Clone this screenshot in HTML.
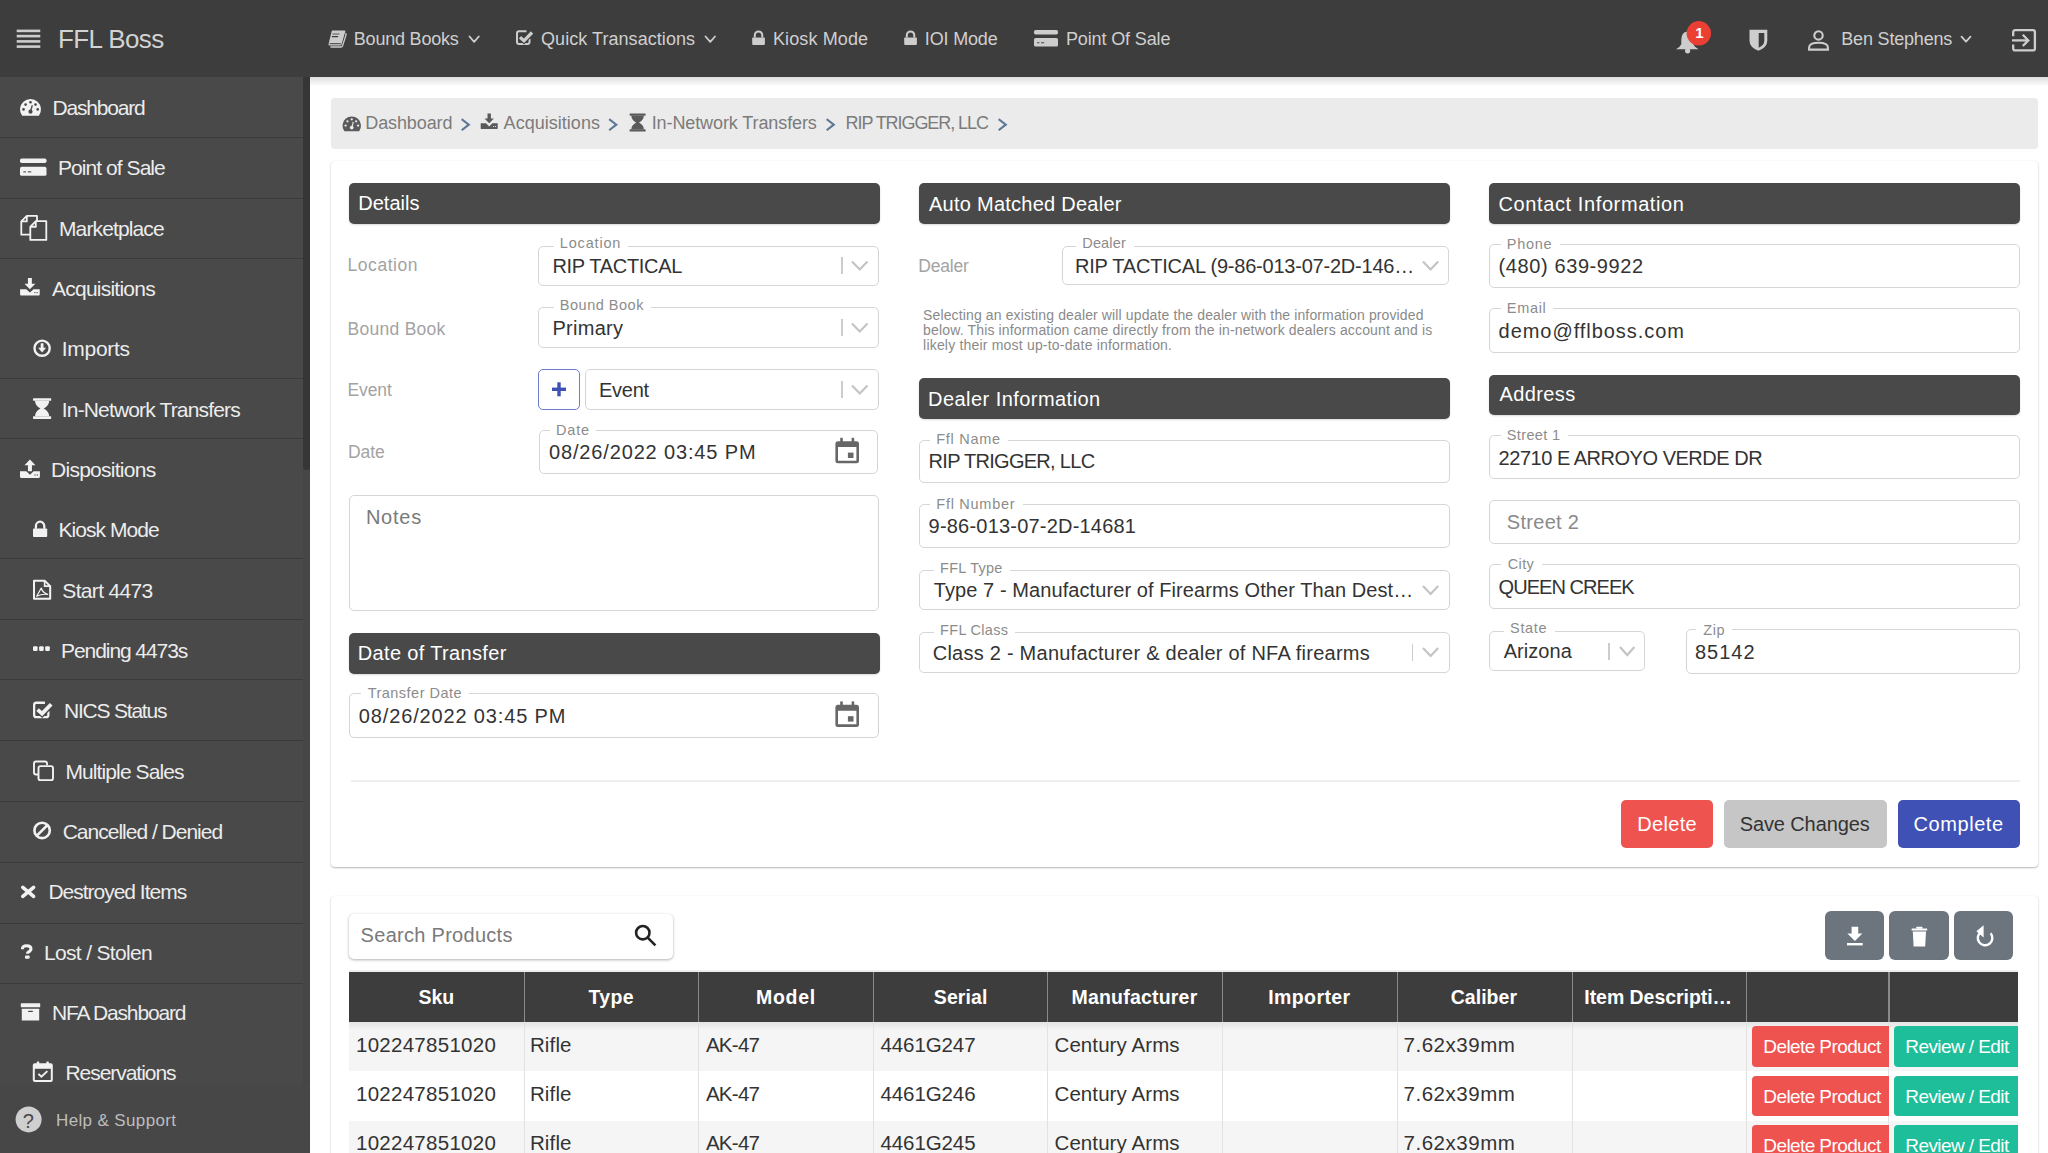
<!DOCTYPE html>
<html><head><meta charset="utf-8"><title>FFL Boss</title>
<style>
html,body{margin:0;padding:0;width:2048px;height:1153px;overflow:hidden;background:#fff;font-family:"Liberation Sans",sans-serif}
#ov{position:absolute;left:0;top:0}
text{font-family:"Liberation Sans",sans-serif;white-space:pre}
</style></head><body>
<div style="position:absolute;left:0px;top:0px;width:2048px;height:77px;background:#3d3d3d"></div><div style="position:absolute;left:310px;top:77px;width:1738px;height:9px;background:linear-gradient(#dcdcdc,rgba(255,255,255,0))"></div><div style="position:absolute;left:0px;top:77px;width:303px;height:1008px;background:#494949"></div><div style="position:absolute;left:303px;top:77px;width:7px;height:1008px;background:#464646"></div><div style="position:absolute;left:303px;top:77px;width:7px;height:393px;background:#363636;border-radius:0 0 3px 3px"></div><div style="position:absolute;left:0px;top:1085px;width:310px;height:68px;background:#474747"></div><div style="position:absolute;left:0px;top:137px;width:303px;height:1px;background:#3b3b3b"></div><div style="position:absolute;left:0px;top:198px;width:303px;height:1px;background:#3b3b3b"></div><div style="position:absolute;left:0px;top:258px;width:303px;height:1px;background:#3b3b3b"></div><div style="position:absolute;left:0px;top:378px;width:303px;height:1px;background:#3b3b3b"></div><div style="position:absolute;left:0px;top:438px;width:303px;height:1px;background:#3b3b3b"></div><div style="position:absolute;left:0px;top:558px;width:303px;height:1px;background:#3b3b3b"></div><div style="position:absolute;left:0px;top:619px;width:303px;height:1px;background:#3b3b3b"></div><div style="position:absolute;left:0px;top:679px;width:303px;height:1px;background:#3b3b3b"></div><div style="position:absolute;left:0px;top:740px;width:303px;height:1px;background:#3b3b3b"></div><div style="position:absolute;left:0px;top:801px;width:303px;height:1px;background:#3b3b3b"></div><div style="position:absolute;left:0px;top:862px;width:303px;height:1px;background:#3b3b3b"></div><div style="position:absolute;left:0px;top:923px;width:303px;height:1px;background:#3b3b3b"></div><div style="position:absolute;left:0px;top:983px;width:303px;height:1px;background:#3b3b3b"></div><div style="position:absolute;left:330.7px;top:98px;width:1707.3px;height:50.69999999999999px;background:#ebebeb;border-radius:4px"></div><div style="position:absolute;left:330.6px;top:161px;width:1707.4px;height:706px;background:#fff;border-radius:4px;box-shadow:0 1px 2px rgba(0,0,0,0.28),0 0 1px rgba(0,0,0,0.10)"></div><div style="position:absolute;left:330.6px;top:896px;width:1707.4px;height:304px;background:#fff;border-radius:4px;box-shadow:0 1px 2px rgba(0,0,0,0.28),0 0 1px rgba(0,0,0,0.10)"></div><div style="position:absolute;left:348.6px;top:183px;width:531.1px;height:41px;background:#494949;border-radius:5px;box-shadow:0 1px 2px rgba(0,0,0,0.15)"></div><div style="position:absolute;left:919.2px;top:183px;width:530.8px;height:41px;background:#494949;border-radius:5px;box-shadow:0 1px 2px rgba(0,0,0,0.15)"></div><div style="position:absolute;left:1489.2px;top:183px;width:531.0999999999999px;height:41px;background:#494949;border-radius:5px;box-shadow:0 1px 2px rgba(0,0,0,0.15)"></div><div style="position:absolute;left:919.2px;top:377.7px;width:530.8px;height:41.0px;background:#494949;border-radius:5px;box-shadow:0 1px 2px rgba(0,0,0,0.15)"></div><div style="position:absolute;left:1489.2px;top:374.6px;width:531.0999999999999px;height:40.39999999999998px;background:#494949;border-radius:5px;box-shadow:0 1px 2px rgba(0,0,0,0.15)"></div><div style="position:absolute;left:348.9px;top:633px;width:530.8000000000001px;height:40.700000000000045px;background:#494949;border-radius:5px;box-shadow:0 1px 2px rgba(0,0,0,0.15)"></div><div style="position:absolute;left:538.4px;top:245.5px;width:340.20000000000005px;height:40.39999999999998px;border:1px solid #d6d6d6;border-radius:5px;box-sizing:border-box;background:#fff"></div><div style="position:absolute;left:553.8px;top:244.5px;width:73.80000000000007px;height:3.0px;background:#fff"></div><div style="position:absolute;left:841px;top:257.0px;width:1.5px;height:17.0px;background:#cccccc"></div><div style="position:absolute;left:538.4px;top:307.3px;width:340.20000000000005px;height:40.5px;border:1px solid #d6d6d6;border-radius:5px;box-sizing:border-box;background:#fff"></div><div style="position:absolute;left:553.8px;top:306.3px;width:97.60000000000002px;height:3.0px;background:#fff"></div><div style="position:absolute;left:841px;top:319.0px;width:1.5px;height:17.0px;background:#cccccc"></div><div style="position:absolute;left:538.4px;top:369.4px;width:41.30000000000007px;height:40.80000000000001px;border:1px solid #6f7cc6;border-radius:5px;box-sizing:border-box"></div><div style="position:absolute;left:585.4px;top:369.4px;width:293.20000000000005px;height:40.80000000000001px;border:1px solid #d6d6d6;border-radius:5px;box-sizing:border-box;background:#fff"></div><div style="position:absolute;left:841px;top:381.0px;width:1.5px;height:17.0px;background:#cccccc"></div><div style="position:absolute;left:538.7px;top:429.8px;width:339.69999999999993px;height:44.19999999999999px;border:1px solid #d6d6d6;border-radius:5px;box-sizing:border-box;background:#fff"></div><div style="position:absolute;left:550px;top:428.8px;width:46.39999999999998px;height:3.0px;background:#fff"></div><div style="position:absolute;left:348.9px;top:494.8px;width:530.3000000000001px;height:116.19999999999999px;border:1px solid #d6d6d6;border-radius:5px;box-sizing:border-box;background:#fff"></div><div style="position:absolute;left:348.9px;top:693.3px;width:530.3000000000001px;height:44.90000000000009px;border:1px solid #d6d6d6;border-radius:5px;box-sizing:border-box;background:#fff"></div><div style="position:absolute;left:360.7px;top:692.3px;width:108.69999999999999px;height:3.0px;background:#fff"></div><div style="position:absolute;left:1061.7px;top:245.5px;width:387.5px;height:39.69999999999999px;border:1px solid #d6d6d6;border-radius:5px;box-sizing:border-box;background:#fff"></div><div style="position:absolute;left:1076.3px;top:244.5px;width:57.700000000000045px;height:3.0px;background:#fff"></div><div style="position:absolute;left:919.2px;top:439.7px;width:530.5px;height:43.30000000000001px;border:1px solid #d6d6d6;border-radius:5px;box-sizing:border-box;background:#fff"></div><div style="position:absolute;left:930.3px;top:438.7px;width:77.90000000000009px;height:3.0px;background:#fff"></div><div style="position:absolute;left:919.2px;top:504px;width:530.5px;height:43.700000000000045px;border:1px solid #d6d6d6;border-radius:5px;box-sizing:border-box;background:#fff"></div><div style="position:absolute;left:930.3px;top:503px;width:92.60000000000002px;height:3px;background:#fff"></div><div style="position:absolute;left:919.2px;top:569.5px;width:530.5px;height:40.700000000000045px;border:1px solid #d6d6d6;border-radius:5px;box-sizing:border-box;background:#fff"></div><div style="position:absolute;left:934.1px;top:568.5px;width:75.89999999999998px;height:3.0px;background:#fff"></div><div style="position:absolute;left:919.2px;top:631.6px;width:530.5px;height:41.0px;border:1px solid #d6d6d6;border-radius:5px;box-sizing:border-box;background:#fff"></div><div style="position:absolute;left:934.1px;top:630.6px;width:81.39999999999998px;height:3.0px;background:#fff"></div><div style="position:absolute;left:1411.7px;top:643.5px;width:1.5px;height:17.0px;background:#cccccc"></div><div style="position:absolute;left:1489.2px;top:243.6px;width:530.8px;height:44.79999999999998px;border:1px solid #d6d6d6;border-radius:5px;box-sizing:border-box;background:#fff"></div><div style="position:absolute;left:1500.8px;top:242.6px;width:58.799999999999955px;height:3.0px;background:#fff"></div><div style="position:absolute;left:1489.2px;top:308.4px;width:530.8px;height:44.60000000000002px;border:1px solid #d6d6d6;border-radius:5px;box-sizing:border-box;background:#fff"></div><div style="position:absolute;left:1500.8px;top:307.4px;width:52.700000000000045px;height:3.0px;background:#fff"></div><div style="position:absolute;left:1489.2px;top:435px;width:530.8px;height:44.30000000000001px;border:1px solid #d6d6d6;border-radius:5px;box-sizing:border-box;background:#fff"></div><div style="position:absolute;left:1500.8px;top:434px;width:67.5px;height:3px;background:#fff"></div><div style="position:absolute;left:1489.2px;top:499.8px;width:530.8px;height:44.599999999999966px;border:1px solid #d6d6d6;border-radius:5px;box-sizing:border-box;background:#fff"></div><div style="position:absolute;left:1489.2px;top:564.4px;width:530.8px;height:44.80000000000007px;border:1px solid #d6d6d6;border-radius:5px;box-sizing:border-box;background:#fff"></div><div style="position:absolute;left:1500.8px;top:563.4px;width:41.0px;height:3.0px;background:#fff"></div><div style="position:absolute;left:1489.2px;top:630.6px;width:156.20000000000005px;height:40.39999999999998px;border:1px solid #d6d6d6;border-radius:5px;box-sizing:border-box;background:#fff"></div><div style="position:absolute;left:1504.1px;top:629.6px;width:50.5px;height:3.0px;background:#fff"></div><div style="position:absolute;left:1608.2px;top:642.5px;width:1.5px;height:17.0px;background:#cccccc"></div><div style="position:absolute;left:1685.6px;top:629.2px;width:334.4000000000001px;height:44.59999999999991px;border:1px solid #d6d6d6;border-radius:5px;box-sizing:border-box;background:#fff"></div><div style="position:absolute;left:1696.3px;top:628.2px;width:36.100000000000136px;height:3.0px;background:#fff"></div><div style="position:absolute;left:351px;top:780px;width:1669px;height:1.5px;background:#eeeeee"></div><div style="position:absolute;left:1621.2px;top:799.7px;width:91.89999999999986px;height:48.69999999999993px;background:#ef5350;border-radius:5px"></div><div style="position:absolute;left:1724px;top:799.7px;width:163.20000000000005px;height:48.69999999999993px;background:#c6c6c6;border-radius:5px"></div><div style="position:absolute;left:1898.2px;top:799.7px;width:122.09999999999991px;height:48.69999999999993px;background:#3f51b5;border-radius:5px"></div><div style="position:absolute;left:348.6px;top:913.5px;width:324.29999999999995px;height:45.700000000000045px;background:#fff;border-radius:5px;box-shadow:0 1px 3px rgba(0,0,0,0.30),0 0 1px rgba(0,0,0,0.08)"></div><div style="position:absolute;left:1824.8px;top:910.7px;width:59.0px;height:49.09999999999991px;background:#6c757d;border-radius:6px"></div><div style="position:absolute;left:1889.4px;top:910.7px;width:59.299999999999955px;height:49.09999999999991px;background:#6c757d;border-radius:6px"></div><div style="position:absolute;left:1954px;top:910.7px;width:59.40000000000009px;height:49.09999999999991px;background:#6c757d;border-radius:6px"></div><div style="position:absolute;left:349.3px;top:969.5px;width:1668.7px;height:2.2999999999999545px;background:#eeeeee"></div><div style="position:absolute;left:349.3px;top:971.8px;width:1668.7px;height:50.60000000000002px;background:#3d3d3d"></div><div style="position:absolute;left:349.3px;top:1022.4px;width:1668.7px;height:49.10000000000002px;background:#f5f5f5"></div><div style="position:absolute;left:349.3px;top:1071.5px;width:1668.7px;height:49.0px;background:#ffffff"></div><div style="position:absolute;left:349.3px;top:1120.5px;width:1668.7px;height:32.5px;background:#f5f5f5"></div><div style="position:absolute;left:349.3px;top:1022.4px;width:1668.7px;height:7.600000000000023px;background:linear-gradient(rgba(0,0,0,0.07),rgba(0,0,0,0))"></div><div style="position:absolute;left:523.5px;top:971.8px;width:1.5px;height:50.60000000000002px;background:#8a8a8a"></div><div style="position:absolute;left:523.5px;top:1022.4px;width:1.2999999999999545px;height:130.60000000000002px;background:#e2e2e2"></div><div style="position:absolute;left:697.7px;top:971.8px;width:1.5px;height:50.60000000000002px;background:#8a8a8a"></div><div style="position:absolute;left:697.7px;top:1022.4px;width:1.2999999999999545px;height:130.60000000000002px;background:#e2e2e2"></div><div style="position:absolute;left:872.7px;top:971.8px;width:1.5px;height:50.60000000000002px;background:#8a8a8a"></div><div style="position:absolute;left:872.7px;top:1022.4px;width:1.2999999999999545px;height:130.60000000000002px;background:#e2e2e2"></div><div style="position:absolute;left:1046.8px;top:971.8px;width:1.5px;height:50.60000000000002px;background:#8a8a8a"></div><div style="position:absolute;left:1046.8px;top:1022.4px;width:1.2999999999999545px;height:130.60000000000002px;background:#e2e2e2"></div><div style="position:absolute;left:1221.8px;top:971.8px;width:1.5px;height:50.60000000000002px;background:#8a8a8a"></div><div style="position:absolute;left:1221.8px;top:1022.4px;width:1.2999999999999545px;height:130.60000000000002px;background:#e2e2e2"></div><div style="position:absolute;left:1396.8px;top:971.8px;width:1.5px;height:50.60000000000002px;background:#8a8a8a"></div><div style="position:absolute;left:1396.8px;top:1022.4px;width:1.2999999999999545px;height:130.60000000000002px;background:#e2e2e2"></div><div style="position:absolute;left:1571.7px;top:971.8px;width:1.5px;height:50.60000000000002px;background:#8a8a8a"></div><div style="position:absolute;left:1571.7px;top:1022.4px;width:1.2999999999999545px;height:130.60000000000002px;background:#e2e2e2"></div><div style="position:absolute;left:1745.5px;top:971.8px;width:1.5px;height:50.60000000000002px;background:#8a8a8a"></div><div style="position:absolute;left:1745.5px;top:1022.4px;width:1.2999999999999545px;height:130.60000000000002px;background:#e2e2e2"></div><div style="position:absolute;left:1888.1px;top:971.8px;width:1.5px;height:50.60000000000002px;background:#8a8a8a"></div><div style="position:absolute;left:1888.1px;top:1022.4px;width:1.2999999999999545px;height:130.60000000000002px;background:#e2e2e2"></div><div style="position:absolute;left:1752.4px;top:1026px;width:136.19999999999982px;height:40.5px;background:#ef5350;border-radius:4px 0 0 4px"></div><div style="position:absolute;left:1894.4px;top:1026px;width:123.59999999999991px;height:40.5px;background:#1dbe99;border-radius:4px 0 0 4px"></div><div style="position:absolute;left:1752.4px;top:1075.8px;width:136.19999999999982px;height:40.5px;background:#ef5350;border-radius:4px 0 0 4px"></div><div style="position:absolute;left:1894.4px;top:1075.8px;width:123.59999999999991px;height:40.5px;background:#1dbe99;border-radius:4px 0 0 4px"></div><div style="position:absolute;left:1752.4px;top:1124.7px;width:136.19999999999982px;height:40.5px;background:#ef5350;border-radius:4px 0 0 4px"></div><div style="position:absolute;left:1894.4px;top:1124.7px;width:123.59999999999991px;height:40.5px;background:#1dbe99;border-radius:4px 0 0 4px"></div>
<svg id="ov" width="2048" height="1153" viewBox="0 0 2048 1153" xmlns="http://www.w3.org/2000/svg">
<rect x="16.7" y="29.599999999999998" width="23.6" height="2.6" fill="#cdcdcd"/><rect x="16.7" y="34.800000000000004" width="23.6" height="2.6" fill="#cdcdcd"/><rect x="16.7" y="40.1" width="23.6" height="2.6" fill="#cdcdcd"/><rect x="16.7" y="45.300000000000004" width="23.6" height="2.6" fill="#cdcdcd"/><polyline points="852,261.5 859.75,269.5 867.5,261.5" fill="none" stroke="#c4c4c4" stroke-width="2.2"/><polyline points="852,323.5 859.75,331.5 867.5,323.5" fill="none" stroke="#c4c4c4" stroke-width="2.2"/><rect x="552" y="387.6" width="14" height="3.4" fill="#3f51b5"/><rect x="557.3" y="382.3" width="3.4" height="14" fill="#3f51b5"/><polyline points="852,385.5 859.75,393.5 867.5,385.5" fill="none" stroke="#c4c4c4" stroke-width="2.2"/><polyline points="1423,261.5 1430.6,269.5 1438.2,261.5" fill="none" stroke="#c4c4c4" stroke-width="2.2"/><polyline points="1423,586 1430.6,594 1438.2,586" fill="none" stroke="#c4c4c4" stroke-width="2.2"/><polyline points="1423,648 1430.6,656 1438.2,648" fill="none" stroke="#c4c4c4" stroke-width="2.2"/><polyline points="1620,647 1627.2,655 1634.4,647" fill="none" stroke="#c4c4c4" stroke-width="2.2"/><g transform="translate(328,29.8)">
<path d="M4.6,0.6 L16.6,0.6 Q17.6,0.6 17.3,1.6 L13.5,14.6 Q13.2,15.6 12.2,15.6 L1.3,15.6 Q0.2,15.6 0.5,14.5 L3.6,1.6 Q3.9,0.6 4.6,0.6 Z" fill="#cdcdcd"/>
<path d="M17.3,3.5 Q18.4,3.8 18.1,5 L14.4,16.5 Q14.1,17.2 13.2,17.2 L2.5,17.2" fill="none" stroke="#cdcdcd" stroke-width="1.3"/>
<rect x="5.5" y="3.5" width="7" height="1.5" fill="#3d3d3d" transform="skewX(-14)" opacity="0.55"/>
<rect x="5.6" y="6.2" width="6.2" height="1.2" fill="#3d3d3d" transform="skewX(-14)"/>
<rect x="1.6" y="13.4" width="11.2" height="1.0" fill="#3d3d3d" />
</g><polyline points="469.5,36.5 474.15,41.8 478.8,36.5" fill="none" stroke="#cdcdcd" stroke-width="1.8" stroke-linecap="round" stroke-linejoin="round"/><g transform="translate(516,30.2) scale(1.0)">
<path d="M10.5,1 L3,1 Q1,1 1,3 L1,11.7 Q1,13.7 3,13.7 L11.5,13.7 Q13.5,13.7 13.5,11.7 L13.5,8.5" fill="none" stroke="#cdcdcd" stroke-width="2"/>
<polyline points="4,7 8,10.6 16,2.3" fill="none" stroke="#3d3d3d" stroke-width="5.5"/>
<polyline points="4,7 8,10.6 16,2.3" fill="none" stroke="#cdcdcd" stroke-width="3.3"/>
</g><polyline points="705.5,36.5 710.25,41.8 715,36.5" fill="none" stroke="#cdcdcd" stroke-width="1.8" stroke-linecap="round" stroke-linejoin="round"/><g transform="translate(752.2,30.2) scale(1.0,1.0)">
<path d="M2.6,7.4 L2.6,5 A3.75,3.75 0 0 1 10.1,5 L10.1,7.4" fill="none" stroke="#cdcdcd" stroke-width="2"/>
<rect x="0" y="7.2" width="12.7" height="7.5" rx="0.8" fill="#cdcdcd"/>
</g><g transform="translate(904.2,30.2) scale(1.0,1.0)">
<path d="M2.6,7.4 L2.6,5 A3.75,3.75 0 0 1 10.1,5 L10.1,7.4" fill="none" stroke="#cdcdcd" stroke-width="2"/>
<rect x="0" y="7.2" width="12.7" height="7.5" rx="0.8" fill="#cdcdcd"/>
</g><g transform="translate(1034,30.1) scale(1.0,1.0)">
<rect x="0" y="0" width="24" height="4.3" rx="1.6" fill="#cdcdcd"/>
<rect x="0" y="7.9" width="24" height="8.5" rx="1.6" fill="#cdcdcd"/>
<rect x="3" y="12.1" width="2.4" height="1.1" fill="#555"/>
<rect x="7" y="12.1" width="3.2" height="1.1" fill="#555"/>
</g><g transform="translate(1675.8,30.8)" fill="#cdcdcd">
<path d="M11.5,0.8 Q17.5,1.5 17.5,9 L17.5,13.5 Q18.5,16 22.8,18.5 L0.2,18.5 Q4.5,16 5.5,13.5 L5.5,9 Q5.5,1.5 11.5,0.8 Z"/>
<circle cx="11.8" cy="20" r="2.6"/>
</g><circle cx="1698.8" cy="33.3" r="12.2" fill="#ec3f33"/><g transform="translate(1749.5,29.8)">
<path d="M0,0 L17.8,0 L17.8,11 Q17.8,17.5 8.9,21 Q0,17.5 0,11 Z" fill="#cdcdcd"/>
<path d="M9.2,3.2 L14.8,3.2 L14.8,11 Q14.8,15.3 9.2,18 Z" fill="#3d3d3d"/>
</g><g transform="translate(1808,30.3)" fill="none" stroke="#cdcdcd" stroke-width="2.1">
<circle cx="10.5" cy="5.1" r="4.2"/>
<path d="M1.1,19.3 L1.1,17.2 Q1.1,12.4 10.5,12.4 Q19.9,12.4 19.9,17.2 L19.9,19.3 Z"/>
</g><polyline points="1961.5,36.7 1966.0,41.6 1970.5,36.7" fill="none" stroke="#cdcdcd" stroke-width="1.8" stroke-linecap="round" stroke-linejoin="round"/><g transform="translate(2012,29)" fill="none" stroke="#cdcdcd" stroke-width="2.3">
<path d="M1.2,7.3 L1.2,3.2 Q1.2,1.2 3.2,1.2 L20.9,1.2 Q22.9,1.2 22.9,3.2 L22.9,19.4 Q22.9,21.4 20.9,21.4 L3.2,21.4 Q1.2,21.4 1.2,19.4 L1.2,15.5"/>
<line x1="0" y1="11.4" x2="15.8" y2="11.4"/>
<polyline points="10.8,5.8 16.3,11.4 10.8,17"/>
</g><g transform="translate(20,99) scale(1.0)">
<path d="M2.1,16.8 A10.5,10.5 0 1 1 18.9,16.8 Z" fill="#f2f2f2"/>
<circle cx="3.5" cy="10.4" r="1.3" fill="#494949"/><circle cx="5.6" cy="5.6" r="1.3" fill="#494949"/>
<circle cx="10.5" cy="3.3" r="1.3" fill="#494949"/><circle cx="15.5" cy="5.6" r="1.3" fill="#494949"/>
<circle cx="17.7" cy="10.4" r="1.3" fill="#494949"/>
<circle cx="10.5" cy="12.7" r="2.1" fill="#494949"/>
<line x1="10.5" y1="12.7" x2="12.3" y2="6.3" stroke="#494949" stroke-width="1.3"/>
</g><g transform="translate(20,158.42999999999998) scale(1.1041666666666667,1.0609756097560976)">
<rect x="0" y="0" width="24" height="4.3" rx="1.6" fill="#f2f2f2"/>
<rect x="0" y="7.9" width="24" height="8.5" rx="1.6" fill="#f2f2f2"/>
<rect x="3" y="12.1" width="2.4" height="1.1" fill="#555"/>
<rect x="7" y="12.1" width="3.2" height="1.1" fill="#555"/>
</g><g transform="translate(20.3,214.96)" fill="none" stroke="#f2f2f2" stroke-width="1.8" stroke-linejoin="round">
<path d="M1,6.5 L6.5,1 L16.7,1 L16.7,19.7 L1,19.7 Z"/>
<path d="M1,6.5 L6.5,6.5 L6.5,1"/>
<path d="M10,11.8 L15.5,6.2 L26,6.2 L26,25 L10,25 Z" fill="#494949"/>
<path d="M10,11.8 L15.5,11.8 L15.5,6.2"/>
</g><g transform="translate(20.1,278.09000000000003) scale(0.9800000000000001,0.9611111111111111)" fill="#f2f2f2">
<path d="M0,11.5 L6.3,11.5 L10,15 L13.7,11.5 L20,11.5 L20,17 Q20,18 19,18 L1,18 Q0,18 0,17 Z"/>
<path d="M8,0 L12,0 L12,6 L15.5,6 L10,11.5 L4.5,6 L8,6 Z"/>
<rect x="14.5" y="14.6" width="1.2" height="1.1" fill="#494949"/><rect x="16.8" y="14.6" width="1.2" height="1.1" fill="#494949"/>
</g><circle cx="42.1" cy="348.21999999999997" r="7.6000000000000005" fill="none" stroke="#f2f2f2" stroke-width="2.4"/>
<path d="M40.7,343.21999999999997 L43.5,343.21999999999997 L43.5,347.71999999999997 L46.1,347.71999999999997 L42.1,352.41999999999996 L38.1,347.71999999999997 L40.7,347.71999999999997 Z" fill="#f2f2f2"/><g transform="translate(33,398.15) scale(1.011111111111111,0.9904761904761905)" fill="#f2f2f2">
<rect x="0" y="0" width="18" height="2.6" rx="0.6"/>
<rect x="0" y="18.4" width="18" height="2.6" rx="0.6"/>
<path d="M2,2.6 L16,2.6 Q16,7.5 10.6,10.5 Q16,13.5 16,18.4 L2,18.4 Q2,13.5 7.4,10.5 Q2,7.5 2,2.6 Z"/>
</g><g transform="translate(20,459.58000000000004) scale(0.9949999999999999,1.0166666666666666)" fill="#f2f2f2">
<path d="M0,11.5 L6.3,11.5 L10,15 L13.7,11.5 L20,11.5 L20,17 Q20,18 19,18 L1,18 Q0,18 0,17 Z"/>
<path d="M10,0 L15.5,5.5 L12,5.5 L12,11.5 L8,11.5 L8,5.5 L4.5,5.5 Z"/>
<rect x="14.5" y="14.6" width="1.2" height="1.1" fill="#494949"/><rect x="16.8" y="14.6" width="1.2" height="1.1" fill="#494949"/>
</g><g transform="translate(33,520.31) scale(1.1181102362204725,1.1292517006802723)">
<path d="M2.6,7.4 L2.6,5 A3.75,3.75 0 0 1 10.1,5 L10.1,7.4" fill="none" stroke="#f2f2f2" stroke-width="2"/>
<rect x="0" y="7.2" width="12.7" height="7.5" rx="0.8" fill="#f2f2f2"/>
</g><g transform="translate(33,579.64) scale(1.011111111111111,1.0)">
<path d="M1,1 L11.5,1 L17,6.5 L17,19.2 L1,19.2 Z" fill="none" stroke="#f2f2f2" stroke-width="2" stroke-linejoin="round"/>
<path d="M11.5,1 L11.5,6.5 L17,6.5" fill="none" stroke="#f2f2f2" stroke-width="1.6"/>
<path d="M3.6,16.6 Q6,12.5 8.2,8.4 Q9.6,13.2 14.4,14.8 Q9,14 3.6,16.6 Z" fill="none" stroke="#f2f2f2" stroke-width="1.2" stroke-linejoin="round"/>
</g><rect x="33.0" y="646.1700000000001" width="4.6" height="4.8" rx="1.2" fill="#f2f2f2"/><rect x="39.1" y="646.1700000000001" width="4.6" height="4.8" rx="1.2" fill="#f2f2f2"/><rect x="45.2" y="646.1700000000001" width="4.6" height="4.8" rx="1.2" fill="#f2f2f2"/><g transform="translate(33,701.5999999999999) scale(1.1379310344827587)">
<path d="M10.5,1 L3,1 Q1,1 1,3 L1,11.7 Q1,13.7 3,13.7 L11.5,13.7 Q13.5,13.7 13.5,11.7 L13.5,8.5" fill="none" stroke="#f2f2f2" stroke-width="2"/>
<polyline points="4,7 8,10.6 16,2.3" fill="none" stroke="#494949" stroke-width="5.5"/>
<polyline points="4,7 8,10.6 16,2.3" fill="none" stroke="#f2f2f2" stroke-width="3.3"/>
</g><g transform="translate(33,760.53) scale(1.0,1.0)" fill="none" stroke="#f2f2f2" stroke-width="1.9">
<path d="M14,4.5 L14,3 Q14,1 12,1 L3,1 Q1,1 1,3 L1,12 Q1,14 3,14 L5,14"/>
<rect x="5.5" y="5.6" width="14.5" height="14" rx="2"/>
</g><circle cx="42.1" cy="830.46" r="7.7" fill="none" stroke="#f2f2f2" stroke-width="2.6"/>
<line x1="37.15" y1="835.4100000000001" x2="47.050000000000004" y2="825.51" stroke="#f2f2f2" stroke-width="2.6"/><g stroke="#f2f2f2" stroke-width="3.6" stroke-linecap="round">
<line x1="22.8" y1="887.29" x2="33.6" y2="896.29"/><line x1="33.6" y1="887.29" x2="22.8" y2="896.29"/></g><g transform="translate(20.8,944.62) scale(1.0,1.0)">
<path d="M1.6,4.6 Q1.6,1.2 5.9,1.2 Q10.2,1.2 10.2,4.2 Q10.2,6.2 7.6,7.4 Q6.6,7.9 6.6,9.2" fill="none" stroke="#f2f2f2" stroke-width="3.0" stroke-linejoin="round"/>
<rect x="4.2" y="10.8" width="4.6" height="3.4" rx="0.8" fill="#f2f2f2"/>
</g><g transform="translate(20.8,1003.15) scale(1.0,1.0)" fill="#f2f2f2">
<rect x="0" y="0" width="19.4" height="4.2" rx="0.5"/>
<rect x="1" y="5.5" width="17.4" height="11.9" rx="0.5"/>
<rect x="7.2" y="7.5" width="5" height="1.3" rx="0.6" fill="#494949"/>
</g><g transform="translate(32.8,1061.58) scale(1.0,1.0)">
<rect x="1" y="2.6" width="18" height="16.8" rx="1" fill="none" stroke="#f2f2f2" stroke-width="2"/>
<rect x="1" y="2.6" width="18" height="4.6" fill="#f2f2f2"/>
<rect x="4" y="0" width="2.4" height="4" rx="0.6" fill="#f2f2f2"/><rect x="13.6" y="0" width="2.4" height="4" rx="0.6" fill="#f2f2f2"/>
<polyline points="5.6,12.3 8.6,15.2 14.6,9.6" fill="none" stroke="#f2f2f2" stroke-width="1.9"/>
</g><circle cx="28.6" cy="1119.4" r="13" fill="#cfcfcf"/><g transform="translate(342.5,116.4) scale(0.8809523809523809)">
<path d="M2.1,16.8 A10.5,10.5 0 1 1 18.9,16.8 Z" fill="#5a5a5a"/>
<circle cx="3.5" cy="10.4" r="1.3" fill="#ebebeb"/><circle cx="5.6" cy="5.6" r="1.3" fill="#ebebeb"/>
<circle cx="10.5" cy="3.3" r="1.3" fill="#ebebeb"/><circle cx="15.5" cy="5.6" r="1.3" fill="#ebebeb"/>
<circle cx="17.7" cy="10.4" r="1.3" fill="#ebebeb"/>
<circle cx="10.5" cy="12.7" r="2.1" fill="#ebebeb"/>
<line x1="10.5" y1="12.7" x2="12.3" y2="6.3" stroke="#ebebeb" stroke-width="1.3"/>
</g><g transform="translate(480.7,113.4) scale(0.85,0.8666666666666667)" fill="#5a5a5a">
<path d="M0,11.5 L6.3,11.5 L10,15 L13.7,11.5 L20,11.5 L20,17 Q20,18 19,18 L1,18 Q0,18 0,17 Z"/>
<path d="M8,0 L12,0 L12,6 L15.5,6 L10,11.5 L4.5,6 L8,6 Z"/>
<rect x="14.5" y="14.6" width="1.2" height="1.1" fill="#ebebeb"/><rect x="16.8" y="14.6" width="1.2" height="1.1" fill="#ebebeb"/>
</g><g transform="translate(629.6,113.4) scale(0.8888888888888888,0.8571428571428571)" fill="#5a5a5a">
<rect x="0" y="0" width="18" height="2.6" rx="0.6"/>
<rect x="0" y="18.4" width="18" height="2.6" rx="0.6"/>
<path d="M2,2.6 L16,2.6 Q16,7.5 10.6,10.5 Q16,13.5 16,18.4 L2,18.4 Q2,13.5 7.4,10.5 Q2,7.5 2,2.6 Z"/>
</g><polyline points="462.5,119.8 468.8,124.69999999999999 462.5,129.6" fill="none" stroke="#5d7797" stroke-width="2.1" stroke-linecap="square" stroke-linejoin="miter"/><polyline points="610,119.8 616.3,124.69999999999999 610,129.6" fill="none" stroke="#5d7797" stroke-width="2.1" stroke-linecap="square" stroke-linejoin="miter"/><polyline points="827.5,119.8 833.8,124.69999999999999 827.5,129.6" fill="none" stroke="#5d7797" stroke-width="2.1" stroke-linecap="square" stroke-linejoin="miter"/><polyline points="999.5,119.8 1005.8,124.69999999999999 999.5,129.6" fill="none" stroke="#5d7797" stroke-width="2.1" stroke-linecap="square" stroke-linejoin="miter"/><g transform="translate(835.4,437.8)">
<path d="M2.6,3.4 L21,3.4 Q23.6,3.4 23.6,6 L23.6,23 Q23.6,25.5 21,25.5 L2.6,25.5 Q0,25.5 0,23 L0,6 Q0,3.4 2.6,3.4 Z M2.6,9.3 L2.6,22.9 L21,22.9 L21,9.3 Z" fill="#676767" fill-rule="evenodd"/>
<rect x="4.8" y="0" width="2.6" height="5" fill="#676767"/><rect x="16.2" y="0" width="2.6" height="5" fill="#676767"/>
<rect x="12.5" y="14.8" width="5.6" height="5.4" fill="#676767"/>
</g><g transform="translate(835.4,701.4)">
<path d="M2.6,3.4 L21,3.4 Q23.6,3.4 23.6,6 L23.6,23 Q23.6,25.5 21,25.5 L2.6,25.5 Q0,25.5 0,23 L0,6 Q0,3.4 2.6,3.4 Z M2.6,9.3 L2.6,22.9 L21,22.9 L21,9.3 Z" fill="#676767" fill-rule="evenodd"/>
<rect x="4.8" y="0" width="2.6" height="5" fill="#676767"/><rect x="16.2" y="0" width="2.6" height="5" fill="#676767"/>
<rect x="12.5" y="14.8" width="5.6" height="5.4" fill="#676767"/>
</g><g transform="translate(634.4,924.3)" fill="none" stroke="#222222" stroke-width="2.6">
<circle cx="8.4" cy="8.4" r="6.7"/>
<line x1="13.3" y1="13.3" x2="21" y2="21" stroke-linecap="butt"/>
</g><g fill="#ffffff"><path d="M1851.6,926.7 L1858.2,926.7 L1858.2,933.5 L1862.4,933.5 L1854.9,941 L1847.4,933.5 L1851.6,933.5 Z"/><rect x="1847" y="943" width="15.7" height="2.4"/></g><g fill="#ffffff"><rect x="1911.6" y="928.4" width="15.6" height="2.2" rx="0.5"/><rect x="1916.2" y="926.7" width="6.4" height="2" rx="0.8"/><path d="M1912.8,931.6 L1926,931.6 L1925.2,946.5 L1913.6,946.5 Z"/></g><g><path d="M1981.2,931.8 A7.3,7.3 0 1 0 1990.6,933.2" fill="none" stroke="#ffffff" stroke-width="2.4"/><path d="M1983.6,925.3 L1983.6,937.4 L1976.4,931.3 Z" fill="#ffffff"/></g>
<text x="58.00" y="47.60" font-size="26" font-weight="400" fill="#d2d2d2" letter-spacing="-0.571" >FFL Boss</text><text x="353.80" y="44.70" font-size="18" font-weight="400" fill="#cfcfcf" letter-spacing="-0.210" >Bound Books</text><text x="541.00" y="44.70" font-size="18" font-weight="400" fill="#cfcfcf" letter-spacing="0.059" >Quick Transactions</text><text x="772.90" y="44.70" font-size="18" font-weight="400" fill="#cfcfcf" letter-spacing="0.133" >Kiosk Mode</text><text x="924.80" y="44.70" font-size="18" font-weight="400" fill="#cfcfcf" letter-spacing="-0.157" >IOI Mode</text><text x="1065.90" y="44.70" font-size="18" font-weight="400" fill="#cfcfcf" letter-spacing="-0.125" >Point Of Sale</text><text x="1841.30" y="44.70" font-size="18" font-weight="400" fill="#cfcfcf" letter-spacing="-0.191" >Ben Stephens</text><text x="52.60" y="115.00" font-size="21" font-weight="400" fill="#ececec" letter-spacing="-1.200" >Dashboard</text><text x="58.00" y="175.33" font-size="21" font-weight="400" fill="#ececec" letter-spacing="-0.942" >Point of Sale</text><text x="59.00" y="235.66" font-size="21" font-weight="400" fill="#ececec" letter-spacing="-0.870" >Marketplace</text><text x="52.00" y="295.99" font-size="21" font-weight="400" fill="#ececec" letter-spacing="-0.764" >Acquisitions</text><text x="61.80" y="356.32" font-size="21" font-weight="400" fill="#ececec" letter-spacing="-0.300" >Imports</text><text x="61.80" y="416.65" font-size="21" font-weight="400" fill="#ececec" letter-spacing="-0.842" >In-Network Transfers</text><text x="51.00" y="476.98" font-size="21" font-weight="400" fill="#ececec" letter-spacing="-0.727" >Dispositions</text><text x="58.50" y="537.31" font-size="21" font-weight="400" fill="#ececec" letter-spacing="-0.956" >Kiosk Mode</text><text x="62.30" y="597.64" font-size="21" font-weight="400" fill="#ececec" letter-spacing="-0.667" >Start 4473</text><text x="61.00" y="657.97" font-size="21" font-weight="400" fill="#ececec" letter-spacing="-1.067" >Pending 4473s</text><text x="64.00" y="718.30" font-size="21" font-weight="400" fill="#ececec" letter-spacing="-1.210" >NICS Status</text><text x="65.40" y="778.63" font-size="21" font-weight="400" fill="#ececec" letter-spacing="-0.885" >Multiple Sales</text><text x="62.70" y="838.96" font-size="21" font-weight="400" fill="#ececec" letter-spacing="-1.000" >Cancelled / Denied</text><text x="48.40" y="899.29" font-size="21" font-weight="400" fill="#ececec" letter-spacing="-1.007" >Destroyed Items</text><text x="44.00" y="959.62" font-size="21" font-weight="400" fill="#ececec" letter-spacing="-0.667" >Lost / Stolen</text><text x="52.00" y="1019.95" font-size="21" font-weight="400" fill="#ececec" letter-spacing="-1.142" >NFA Dashboard</text><text x="65.40" y="1080.28" font-size="21" font-weight="400" fill="#ececec" letter-spacing="-1.036" >Reservations</text><text x="56.00" y="1125.60" font-size="17" font-weight="400" fill="#bdbdbd" letter-spacing="0.369" >Help &amp; Support</text><text x="365.30" y="129.00" font-size="18" font-weight="400" fill="#7b7b7b" letter-spacing="-0.113" >Dashboard</text><text x="503.60" y="129.00" font-size="18" font-weight="400" fill="#7b7b7b" letter-spacing="0.027" >Acquisitions</text><text x="651.70" y="129.00" font-size="18" font-weight="400" fill="#7b7b7b" letter-spacing="-0.100" >In-Network Transfers</text><text x="845.60" y="129.00" font-size="18" font-weight="400" fill="#7b7b7b" letter-spacing="-1.067" >RIP TRIGGER, LLC</text><text x="358.30" y="210.10" font-size="20" font-weight="400" fill="#ffffff" letter-spacing="0.000" >Details</text><text x="929.00" y="210.50" font-size="20" font-weight="400" fill="#ffffff" letter-spacing="0.256" >Auto Matched Dealer</text><text x="1498.50" y="210.50" font-size="20" font-weight="400" fill="#ffffff" letter-spacing="0.606" >Contact Information</text><text x="928.00" y="405.50" font-size="20" font-weight="400" fill="#ffffff" letter-spacing="0.453" >Dealer Information</text><text x="1499.60" y="401.40" font-size="20" font-weight="400" fill="#ffffff" letter-spacing="0.367" >Address</text><text x="357.80" y="660.30" font-size="20" font-weight="400" fill="#ffffff" letter-spacing="0.347" >Date of Transfer</text><text x="347.60" y="271.25" font-size="17.5" font-weight="400" fill="#a3a3a3" letter-spacing="0.529" >Location</text><text x="347.60" y="334.70" font-size="17.5" font-weight="400" fill="#a3a3a3" letter-spacing="0.267" >Bound Book</text><text x="347.60" y="395.60" font-size="17.5" font-weight="400" fill="#a3a3a3" letter-spacing="-0.150" >Event</text><text x="347.90" y="458.00" font-size="17.5" font-weight="400" fill="#a3a3a3" letter-spacing="-0.033" >Date</text><text x="918.20" y="272.00" font-size="17.5" font-weight="400" fill="#a3a3a3" letter-spacing="-0.180" >Dealer</text><text x="559.80" y="247.60" font-size="14.5" font-weight="400" fill="#8c8c8c" letter-spacing="0.829" >Location</text><text x="552.40" y="272.70" font-size="20" font-weight="400" fill="#333333" letter-spacing="-0.309" >RIP TACTICAL</text><text x="559.80" y="310.00" font-size="14.5" font-weight="400" fill="#8c8c8c" letter-spacing="0.511" >Bound Book</text><text x="552.40" y="334.60" font-size="20" font-weight="400" fill="#333333" letter-spacing="0.300" >Primary</text><text x="599.00" y="397.00" font-size="20" font-weight="400" fill="#333333" letter-spacing="-0.250" >Event</text><text x="556.00" y="434.60" font-size="14.5" font-weight="400" fill="#8c8c8c" letter-spacing="0.800" >Date</text><text x="549.00" y="459.30" font-size="20" font-weight="400" fill="#333333" letter-spacing="0.850" >08/26/2022 03:45 PM</text><text x="365.90" y="524.30" font-size="20" font-weight="400" fill="#7a7a7a" letter-spacing="0.775" >Notes</text><text x="367.70" y="698.40" font-size="14.5" font-weight="400" fill="#8c8c8c" letter-spacing="0.475" >Transfer Date</text><text x="358.80" y="723.40" font-size="20" font-weight="400" fill="#333333" letter-spacing="0.856" >08/26/2022 03:45 PM</text><text x="1082.30" y="247.50" font-size="14.5" font-weight="400" fill="#8c8c8c" letter-spacing="0.140" >Dealer</text><text x="1075.00" y="272.60" font-size="20" font-weight="400" fill="#333333" letter-spacing="-0.212" >RIP TACTICAL (9-86-013-07-2D-146…</text><text x="923.10" y="320.00" font-size="14" font-weight="400" fill="#8a8a8a" letter-spacing="0.126" >Selecting an existing dealer will update the dealer with the information provided</text><text x="923.10" y="335.20" font-size="14" font-weight="400" fill="#8a8a8a" letter-spacing="0.153" >below. This information came directly from the in-network dealers account and is</text><text x="923.10" y="350.00" font-size="14" font-weight="400" fill="#8a8a8a" letter-spacing="0.192" >likely their most up-to-date information.</text><text x="936.30" y="443.80" font-size="14.5" font-weight="400" fill="#8c8c8c" letter-spacing="0.700" >Ffl Name</text><text x="928.60" y="467.90" font-size="20" font-weight="400" fill="#333333" letter-spacing="-0.707" >RIP TRIGGER, LLC</text><text x="936.30" y="508.90" font-size="14.5" font-weight="400" fill="#8c8c8c" letter-spacing="0.733" >Ffl Number</text><text x="928.60" y="533.00" font-size="20" font-weight="400" fill="#333333" letter-spacing="0.205" >9-86-013-07-2D-14681</text><text x="940.10" y="572.80" font-size="14.5" font-weight="400" fill="#8c8c8c" letter-spacing="0.271" >FFL Type</text><text x="933.70" y="597.40" font-size="20" font-weight="400" fill="#333333" letter-spacing="0.086" >Type 7 - Manufacturer of Firearms Other Than Dest…</text><text x="940.10" y="634.80" font-size="14.5" font-weight="400" fill="#8c8c8c" letter-spacing="0.300" >FFL Class</text><text x="932.70" y="659.50" font-size="20" font-weight="400" fill="#333333" letter-spacing="0.246" >Class 2 - Manufacturer &amp; dealer of NFA firearms</text><text x="1506.80" y="248.80" font-size="14.5" font-weight="400" fill="#8c8c8c" letter-spacing="0.700" >Phone</text><text x="1498.60" y="273.40" font-size="20" font-weight="400" fill="#333333" letter-spacing="0.600" >(480) 639-9922</text><text x="1506.80" y="313.00" font-size="14.5" font-weight="400" fill="#8c8c8c" letter-spacing="0.675" >Email</text><text x="1498.60" y="337.90" font-size="20" font-weight="400" fill="#333333" letter-spacing="0.947" >demo@fflboss.com</text><text x="1506.80" y="440.00" font-size="14.5" font-weight="400" fill="#8c8c8c" letter-spacing="0.357" >Street 1</text><text x="1498.60" y="465.10" font-size="20" font-weight="400" fill="#333333" letter-spacing="-0.477" >22710 E ARROYO VERDE DR</text><text x="1506.80" y="529.40" font-size="20" font-weight="400" fill="#8a8a8a" letter-spacing="0.300" >Street 2</text><text x="1507.80" y="569.00" font-size="14.5" font-weight="400" fill="#8c8c8c" letter-spacing="0.333" >City</text><text x="1498.60" y="594.20" font-size="20" font-weight="400" fill="#333333" letter-spacing="-0.950" >QUEEN CREEK</text><text x="1510.10" y="632.70" font-size="14.5" font-weight="400" fill="#8c8c8c" letter-spacing="0.625" >State</text><text x="1503.70" y="658.40" font-size="20" font-weight="400" fill="#333333" letter-spacing="0.050" >Arizona</text><text x="1703.30" y="634.70" font-size="14.5" font-weight="400" fill="#8c8c8c" letter-spacing="0.550" >Zip</text><text x="1695.00" y="658.70" font-size="20" font-weight="400" fill="#333333" letter-spacing="0.975" >85142</text><text x="1637.30" y="831.00" font-size="20" font-weight="400" fill="#ffffff" letter-spacing="0.300" >Delete</text><text x="1739.70" y="831.00" font-size="20" font-weight="400" fill="#333333" letter-spacing="-0.109" >Save Changes</text><text x="1913.60" y="831.00" font-size="20" font-weight="400" fill="#ffffff" letter-spacing="0.557" >Complete</text><text x="360.60" y="942.40" font-size="20" font-weight="400" fill="#7a7a7a" letter-spacing="0.286" >Search Products</text><text x="418.50" y="1004.40" font-size="19.5" font-weight="700" fill="#ffffff" letter-spacing="-0.050" >Sku</text><text x="588.40" y="1004.40" font-size="19.5" font-weight="700" fill="#ffffff" letter-spacing="0.367" >Type</text><text x="756.00" y="1004.40" font-size="19.5" font-weight="700" fill="#ffffff" letter-spacing="0.725" >Model</text><text x="933.80" y="1004.40" font-size="19.5" font-weight="700" fill="#ffffff" letter-spacing="0.100" >Serial</text><text x="1071.50" y="1004.40" font-size="19.5" font-weight="700" fill="#ffffff" letter-spacing="0.200" >Manufacturer</text><text x="1268.30" y="1004.40" font-size="19.5" font-weight="700" fill="#ffffff" letter-spacing="0.386" >Importer</text><text x="1450.70" y="1004.40" font-size="19.5" font-weight="700" fill="#ffffff" letter-spacing="0.033" >Caliber</text><text x="1584.30" y="1004.40" font-size="19.5" font-weight="700" fill="#ffffff" letter-spacing="-0.050" >Item Descripti…</text><text x="356.00" y="1051.70" font-size="20.5" font-weight="400" fill="#333333" letter-spacing="0.273" >102247851020</text><text x="529.90" y="1051.70" font-size="20.5" font-weight="400" fill="#333333" letter-spacing="0.150" >Rifle</text><text x="705.90" y="1051.70" font-size="20.5" font-weight="400" fill="#333333" letter-spacing="-0.725" >AK-47</text><text x="880.50" y="1051.70" font-size="20.5" font-weight="400" fill="#333333" letter-spacing="-0.100" >4461G247</text><text x="1054.50" y="1051.70" font-size="20.5" font-weight="400" fill="#333333" letter-spacing="0.082" >Century Arms</text><text x="1403.50" y="1051.70" font-size="20.5" font-weight="400" fill="#333333" letter-spacing="0.525" >7.62x39mm</text><text x="356.00" y="1100.90" font-size="20.5" font-weight="400" fill="#333333" letter-spacing="0.273" >102247851020</text><text x="529.90" y="1100.90" font-size="20.5" font-weight="400" fill="#333333" letter-spacing="0.150" >Rifle</text><text x="705.90" y="1100.90" font-size="20.5" font-weight="400" fill="#333333" letter-spacing="-0.725" >AK-47</text><text x="880.50" y="1100.90" font-size="20.5" font-weight="400" fill="#333333" letter-spacing="-0.100" >4461G246</text><text x="1054.50" y="1100.90" font-size="20.5" font-weight="400" fill="#333333" letter-spacing="0.082" >Century Arms</text><text x="1403.50" y="1100.90" font-size="20.5" font-weight="400" fill="#333333" letter-spacing="0.525" >7.62x39mm</text><text x="356.00" y="1150.10" font-size="20.5" font-weight="400" fill="#333333" letter-spacing="0.273" >102247851020</text><text x="529.90" y="1150.10" font-size="20.5" font-weight="400" fill="#333333" letter-spacing="0.150" >Rifle</text><text x="705.90" y="1150.10" font-size="20.5" font-weight="400" fill="#333333" letter-spacing="-0.725" >AK-47</text><text x="880.50" y="1150.10" font-size="20.5" font-weight="400" fill="#333333" letter-spacing="-0.100" >4461G245</text><text x="1054.50" y="1150.10" font-size="20.5" font-weight="400" fill="#333333" letter-spacing="0.082" >Century Arms</text><text x="1403.50" y="1150.10" font-size="20.5" font-weight="400" fill="#333333" letter-spacing="0.525" >7.62x39mm</text><text x="1763.30" y="1053.40" font-size="19" font-weight="400" fill="#ffffff" letter-spacing="-0.592" >Delete Product</text><text x="1905.30" y="1053.40" font-size="19" font-weight="400" fill="#ffffff" letter-spacing="-0.575" >Review / Edit</text><text x="1763.30" y="1103.20" font-size="19" font-weight="400" fill="#ffffff" letter-spacing="-0.592" >Delete Product</text><text x="1905.30" y="1103.20" font-size="19" font-weight="400" fill="#ffffff" letter-spacing="-0.575" >Review / Edit</text><text x="1763.30" y="1152.10" font-size="19" font-weight="400" fill="#ffffff" letter-spacing="-0.592" >Delete Product</text><text x="1905.30" y="1152.10" font-size="19" font-weight="400" fill="#ffffff" letter-spacing="-0.575" >Review / Edit</text><text x="1695.20" y="38.30" font-size="15" font-weight="700" fill="#ffffff" letter-spacing="0.000" >1</text><text x="22.70" y="1127.50" font-size="20" font-weight="400" fill="#474747" letter-spacing="0.000" >?</text>
</svg>
</body></html>
